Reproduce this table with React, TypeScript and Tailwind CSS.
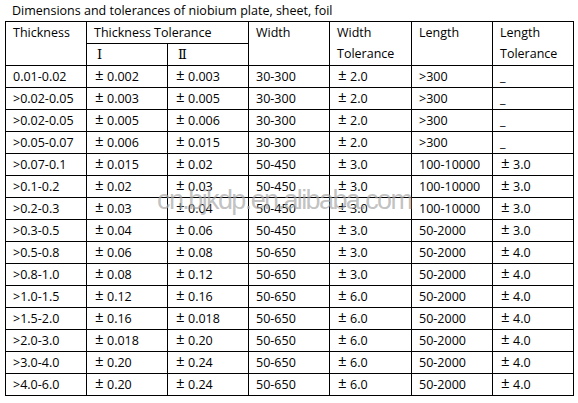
import React from 'react'

type Row = [string, string, string, string, string, string, string]

const rows: Row[] = [
  ['0.01-0.02', '±0.002', '±0.003', '30-300', '±2.0', '>300', '_'],
  ['>0.02-0.05', '±0.003', '±0.005', '30-300', '±2.0', '>300', '_'],
  ['>0.02-0.05', '±0.005', '±0.006', '30-300', '±2.0', '>300', '_'],
  ['>0.05-0.07', '±0.006', '±0.015', '30-300', '±2.0', '>300', '_'],
  ['>0.07-0.1', '±0.015', '±0.02', '50-450', '±3.0', '100-10000', '±3.0'],
  ['>0.1-0.2', '±0.02', '±0.03', '50-450', '±3.0', '100-10000', '±3.0'],
  ['>0.2-0.3', '±0.03', '±0.04', '50-450', '±3.0', '100-10000', '±3.0'],
  ['>0.3-0.5', '±0.04', '±0.06', '50-450', '±3.0', '50-2000', '±3.0'],
  ['>0.5-0.8', '±0.06', '±0.08', '50-650', '±3.0', '50-2000', '±4.0'],
  ['>0.8-1.0', '±0.08', '±0.12', '50-650', '±3.0', '50-2000', '±4.0'],
  ['>1.0-1.5', '±0.12', '±0.16', '50-650', '±6.0', '50-2000', '±4.0'],
  ['>1.5-2.0', '±0.16', '±0.018', '50-650', '±6.0', '50-2000', '±4.0'],
  ['>2.0-3.0', '±0.018', '±0.20', '50-650', '±6.0', '50-2000', '±4.0'],
  ['>3.0-4.0', '±0.20', '±0.24', '50-650', '±6.0', '50-2000', '±4.0'],
  ['>4.0-6.0', '±0.20', '±0.24', '50-650', '±6.0', '50-2000', '±4.0'],
]

// the ± in the source comes from a CJK font: wide and sitting a bit high
const Cell = ({ value }: { value: string }) => {
  if (value.startsWith('±')) {
    return (
      <>
        <span className="relative -top-[1px] inline-block w-[12px] ml-[1px] text-[15px] leading-none">±</span>
        {value.slice(1)}
      </>
    )
  }
  return <>{value}</>
}

export default function App() {
  const th = 'border border-black align-top text-left font-normal pl-[7px] pr-0 py-0'
  return (
    <div
      className="relative w-[578px] h-[403px] bg-white text-black text-[12.5px] leading-[21px] overflow-hidden"
      style={{ fontFamily: '"Open Sans", "Noto Sans", sans-serif' }}
    >
      <div className="h-[21px] pl-[12px] whitespace-nowrap">
        Dimensions and tolerances of niobium plate, sheet, foil
      </div>

      <table className="ml-[5px] table-fixed border-collapse w-[569px]">
        <colgroup>
          <col className="w-[81px]" />
          <col className="w-[81px]" />
          <col className="w-[81px]" />
          <col className="w-[81px]" />
          <col className="w-[82px]" />
          <col className="w-[81px]" />
          <col className="w-[81px]" />
        </colgroup>
        <thead>
          <tr className="h-[21px]">
            <th rowSpan={2} className={th}>Thickness</th>
            <th colSpan={2} className={th}>Thickness Tolerance</th>
            <th rowSpan={2} className={th}>Width</th>
            <th rowSpan={2} className={th}>
              Width
              <br />
              Tolerance
            </th>
            <th rowSpan={2} className={th}>Length</th>
            <th rowSpan={2} className={th}>
              Length
              <br />
              Tolerance
            </th>
          </tr>
          <tr className="h-[21px]">
            <th className={th + ' pl-[10px]'} style={{ fontFamily: '"DejaVu Serif", "Liberation Serif", serif' }}>
              <span className="text-[13px]">Ⅰ</span>
            </th>
            <th className={th + ' pl-[10px]'} style={{ fontFamily: '"DejaVu Serif", "Liberation Serif", serif' }}>
              <span className="text-[13px]">Ⅱ</span>
            </th>
          </tr>
        </thead>
        <tbody>
          {rows.map((r, i) => (
            <tr key={i} className="h-[21.4px]">
              {r.map((v, j) => (
                <td key={j} className="border border-black align-middle pl-[7px] p-0 whitespace-nowrap">
                  <Cell value={v} />
                </td>
              ))}
            </tr>
          ))}
        </tbody>
      </table>

      {/* site watermark laid across the table */}
      <div
        className="absolute left-[157px] top-[187px] text-[27px] leading-none tracking-[-1.6px] text-[#a8a8a8]/70 whitespace-nowrap pointer-events-none select-none"
        style={{ fontFamily: '"Liberation Sans", Arial, sans-serif' }}
      >
        cn.bjkdp.en.alibaba.com
      </div>
    </div>
  )
}
